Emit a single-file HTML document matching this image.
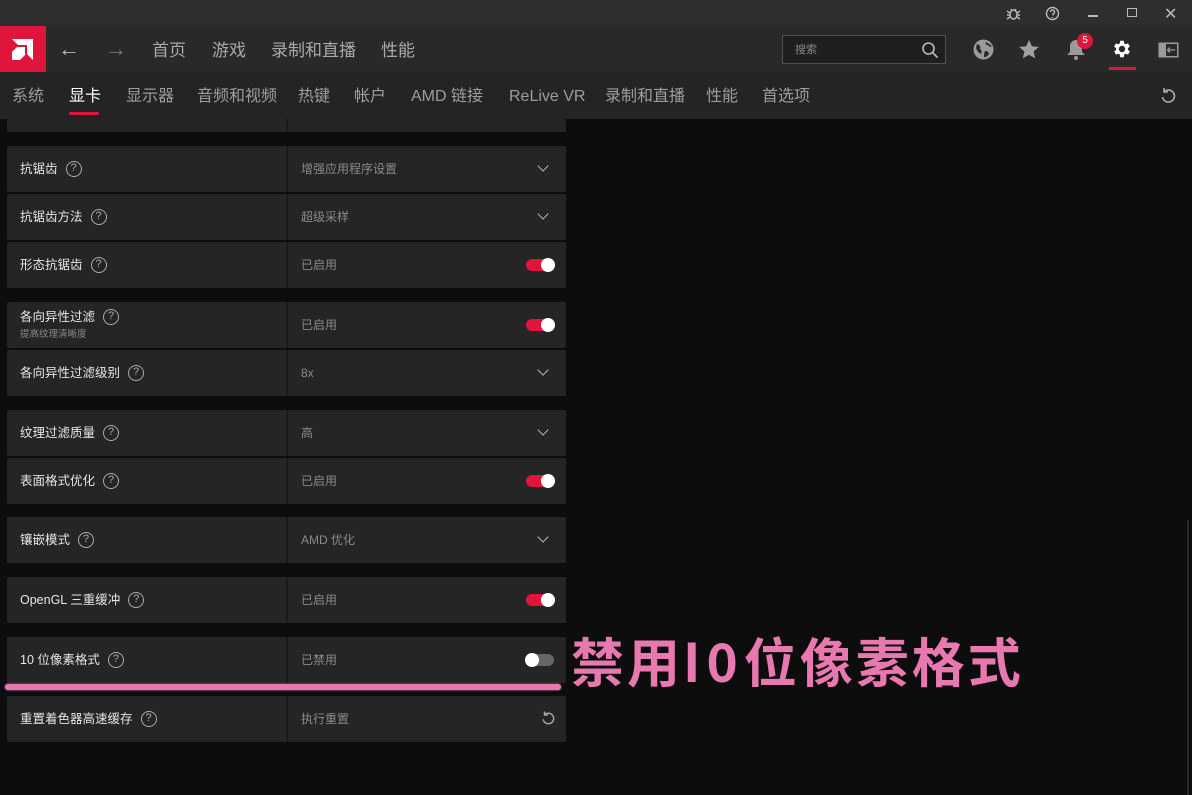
<!DOCTYPE html>
<html><head><meta charset="utf-8"><style>
*{margin:0;padding:0;box-sizing:border-box}
body{width:1192px;height:795px;background:#0d0d0d;font-family:"Liberation Sans","Noto Sans CJK SC",sans-serif;position:relative;overflow:hidden;color:#ddd}
.tb{position:absolute;left:0;top:0;width:1192px;height:26px;background:#2e2e2e}
.nav{position:absolute;left:0;top:26px;width:1192px;height:46px;background:#292929;box-shadow:0 2px 3px rgba(0,0,0,.5)}
.logo{position:absolute;left:0;top:0;width:46px;height:46px;background:#e0153b}
.nav .m{position:absolute;top:15px;font-size:17px;line-height:20px;color:#a8a8a8}
.tabs{position:absolute;left:0;top:72px;width:1192px;height:47px;background:#242424}
.tabs span{position:absolute;top:16px;font-size:16px;line-height:18px;color:#9d9d9d}
.row{position:absolute;left:7px;width:559px;height:46px;background:#252525;border-radius:2px}
.row .d{position:absolute;left:279px;top:0;width:2px;height:100%;background:#1a1a1a}
.row .l{position:absolute;left:13px;top:14px;height:18px;font-size:12.5px;line-height:18px;color:#e6e6e6;white-space:nowrap;display:flex;align-items:center}
.row .r{position:absolute;left:294px;top:15px;font-size:12px;line-height:16px;color:#8a8a8a}
.q{display:inline-block;width:16px;height:16px;border:1.5px solid #aaa;border-radius:50%;font-size:11px;line-height:13px;text-align:center;color:#aaa;margin-left:8px}
.chev{position:absolute;left:532px;top:16px;width:8px;height:8px;border-right:1.6px solid #bbb;border-bottom:1.6px solid #bbb;transform:rotate(45deg)}
.tg{position:absolute;left:519px;top:17px;width:28px;height:12px;border-radius:6px;background:#e0153b}
.tg::after{content:"";position:absolute;right:-1px;top:-1px;width:14px;height:14px;border-radius:50%;background:#fff}
.tg.off{background:#666}.tg.off::after{left:-1px;right:auto}
</style></head><body>
<div class="tb">
<svg style="position:absolute;left:1006px;top:6px" width="15" height="15" viewBox="0 0 15 15" fill="none" stroke="#bbb" stroke-width="1.4"><ellipse cx="7.5" cy="8.5" rx="3.5" ry="4.5"/><path d="M1 5l3 2M14 5l-3 2M1 9h3M11 9h3M1 13l3-2M14 13l-3-2M5 3l1 1.5M10 3l-1 1.5"/></svg>
<svg style="position:absolute;left:1045px;top:6px" width="15" height="15" viewBox="0 0 15 15" fill="none" stroke="#bbb" stroke-width="1.4"><circle cx="7.5" cy="7.5" r="6"/><path d="M5.5 6a2 2 0 1 1 2.5 2v1.5M7.5 11v1"/></svg>
<div style="position:absolute;left:1088px;top:15px;width:10px;height:1.5px;background:#bbb"></div>
<div style="position:absolute;left:1127px;top:8px;width:10px;height:9px;border:1.5px solid #bbb"></div>
<div style="position:absolute;left:1164px;top:4px;font-size:16px;color:#bbb">✕</div>
</div>
<div class="nav">
<div class="logo"><svg width="46" height="46" viewBox="0 0 46 46"><path d="M12 13h21v21l-6-6V19h-9z" fill="#fff"/><path d="M12 26l5-5h8v8l-5 5H12z" fill="#fff"/></svg></div>
<div style="position:absolute;left:58px;top:11px;font-size:22px;line-height:24px;color:#bbb">←</div>
<div style="position:absolute;left:105px;top:11px;font-size:22px;line-height:24px;color:#777">→</div>
<span class="m" style="left:152px">首页</span><span class="m" style="left:212px">游戏</span><span class="m" style="left:271px">录制和直播</span><span class="m" style="left:381px">性能</span>
<div style="position:absolute;left:782px;top:9px;width:164px;height:29px;border:1px solid #505050;background:#1f1f1f"><span style="position:absolute;left:12px;top:8px;font-size:11px;line-height:13px;color:#888">搜索</span>
<svg style="position:absolute;left:138px;top:5px" width="18" height="18" viewBox="0 0 18 18" fill="none" stroke="#bbb" stroke-width="1.6"><circle cx="7.5" cy="7.5" r="5.5"/><path d="M11.5 11.5l5 5"/></svg></div>
<svg style="position:absolute;left:973px;top:13px" width="21" height="21" viewBox="0 0 21 21"><circle cx="10.5" cy="10.5" r="10" fill="#9a9a9a"/><path d="M4 5c3 1 4 3 3 5 2 1 2 3 1 5-2-1-4-3-5-6M13 3c-1 2 0 3 2 3 1 2 3 2 4 1M12 12c2 0 4 1 4 3-1 2-3 3-5 3 0-2 0-4 1-6" fill="#292929"/></svg>
<svg style="position:absolute;left:1018px;top:13px" width="22" height="21" viewBox="0 0 24 23"><path d="M12 1l3.2 7 7.6.7-5.8 5 1.8 7.5L12 17.3 5.2 21.2 7 13.7 1.2 8.7 8.8 8z" fill="#a0a0a0"/></svg>
<svg style="position:absolute;left:1066px;top:12px" width="20" height="22" viewBox="0 0 20 22"><path d="M10 2a6 6 0 0 0-6 6v6l-3 3h18l-3-3V8a6 6 0 0 0-6-6z" fill="#9a9a9a"/><circle cx="10" cy="20" r="2" fill="#9a9a9a"/></svg>
<div style="position:absolute;left:1077px;top:7px;width:16px;height:16px;border-radius:50%;background:#e0153b;color:#fff;font-size:10px;text-align:center;line-height:16px">5</div>
<svg style="position:absolute;left:1111px;top:12px" width="22" height="22" viewBox="0 0 24 24"><path fill="#fff" d="M19.4 13a7.5 7.5 0 0 0 0-2l2.1-1.6-2-3.5-2.5 1a7.6 7.6 0 0 0-1.7-1L15 3h-4l-.4 2.9a7.6 7.6 0 0 0-1.7 1l-2.5-1-2 3.5L6.6 11a7.5 7.5 0 0 0 0 2l-2.1 1.6 2 3.5 2.5-1a7.6 7.6 0 0 0 1.7 1L11 21h4l.4-2.9a7.6 7.6 0 0 0 1.7-1l2.5 1 2-3.5zM13 15.5a3.5 3.5 0 1 1 0-7 3.5 3.5 0 0 1 0 7z" transform="translate(-1 0)"/></svg>
<div style="position:absolute;left:1109px;top:41px;width:27px;height:3px;background:#e0153b"></div>
<svg style="position:absolute;left:1158px;top:16px" width="21" height="16" viewBox="0 0 21 16"><rect x="0.5" y="0.5" width="20" height="15" fill="#9a9a9a"/><rect x="8" y="2" width="11" height="12" fill="#292929"/><path d="M17 8h-7M12 5.5L9.5 8 12 10.5" stroke="#9a9a9a" stroke-width="1.3" fill="none"/></svg>
</div>
<div class="tabs">
<span style="left:12px">系统</span><span style="left:69px;color:#fff">显卡</span><span style="left:126px">显示器</span><span style="left:197px">音频和视频</span><span style="left:298px">热键</span><span style="left:354px">帐户</span><span style="left:411px">AMD 链接</span><span style="left:509px">ReLive VR</span><span style="left:605px">录制和直播</span><span style="left:706px">性能</span><span style="left:762px">首选项</span>
<div style="position:absolute;left:69px;top:40px;width:30px;height:3px;border-radius:2px;background:#e0153b"></div>
<svg style="position:absolute;left:1160px;top:15px" width="16" height="17" viewBox="0 0 16 17" fill="none" stroke="#aaa" stroke-width="1.6"><path d="M4 5a6 6 0 1 1-1.5 5"/><path d="M4 1v4h4"/></svg>
</div>
<div class="row" style="top:119px;height:13px;z-index:-1"><div class="d"></div></div>
<div class="row" style="top:146px"><div class="d"></div><div class="l">抗锯齿<span class="q">?</span></div><div class="r">增强应用程序设置</div><div class="chev"></div></div>
<div class="row" style="top:194px"><div class="d"></div><div class="l">抗锯齿方法<span class="q">?</span></div><div class="r">超级采样</div><div class="chev"></div></div>
<div class="row" style="top:242px"><div class="d"></div><div class="l">形态抗锯齿<span class="q">?</span></div><div class="r">已启用</div><div class="tg"></div></div>
<div class="row" style="top:302px"><div class="d"></div><div class="l" style="top:6px">各向异性过滤<span class="q">?</span></div><div style="position:absolute;left:13px;top:27px;font-size:9.5px;line-height:12px;color:#888">提高纹理清晰度</div><div class="r">已启用</div><div class="tg"></div></div>
<div class="row" style="top:350px"><div class="d"></div><div class="l">各向异性过滤级别<span class="q">?</span></div><div class="r">8x</div><div class="chev"></div></div>
<div class="row" style="top:410px"><div class="d"></div><div class="l">纹理过滤质量<span class="q">?</span></div><div class="r">高</div><div class="chev"></div></div>
<div class="row" style="top:458px"><div class="d"></div><div class="l">表面格式优化<span class="q">?</span></div><div class="r">已启用</div><div class="tg"></div></div>
<div class="row" style="top:517px"><div class="d"></div><div class="l">镶嵌模式<span class="q">?</span></div><div class="r">AMD 优化</div><div class="chev"></div></div>
<div class="row" style="top:577px"><div class="d"></div><div class="l">OpenGL 三重缓冲<span class="q">?</span></div><div class="r">已启用</div><div class="tg"></div></div>
<div class="row" style="top:637px"><div class="d"></div><div class="l">10 位像素格式<span class="q">?</span></div><div class="r">已禁用</div><div class="tg off"></div></div>
<div style="position:absolute;left:5px;top:684px;width:556px;height:6px;border-radius:3px;background:#e878b0;box-shadow:0 0 2px #e878b0"></div>
<div class="row" style="top:696px"><div class="d"></div><div class="l">重置着色器高速缓存<span class="q">?</span></div><div class="r">执行重置</div><svg style="position:absolute;left:534px;top:14px" width="14" height="16" viewBox="0 0 16 17" fill="none" stroke="#aaa" stroke-width="1.6"><path d="M4 5a6 6 0 1 1-1.5 5"/><path d="M4 1v4h4"/></svg></div>
<div style="position:absolute;left:571px;top:629px;font-size:53px;line-height:62px;font-weight:bold;color:#e878b0;letter-spacing:3px;white-space:nowrap;font-family:'Noto Sans CJK SC',sans-serif">禁用<span style="letter-spacing:6px">I0</span>位像素格式</div>
<div style="position:absolute;left:1187px;top:520px;width:2px;height:275px;background:#2a2a2a"></div>
</body></html>
